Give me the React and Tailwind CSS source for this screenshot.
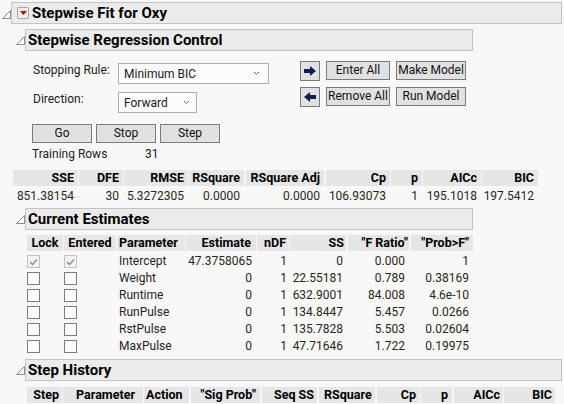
import React from 'react';

function Tri() {
  return (
    <svg width="9" height="9" viewBox="0 0 9 9" className="shrink-0 block">
      <path d="M0.5 8.5 H8.5 V0.5 Z" fill="#fbfbfb" stroke="#8e8e8e" strokeWidth="1" />
    </svg>
  );
}

function Chevron() {
  return (
    <svg width="7" height="5" viewBox="0 0 7 5" className="block">
      <path d="M1 1 L3.5 3.5 L6 1" fill="none" stroke="#707070" strokeWidth="1" />
    </svg>
  );
}

function Check({ locked }) {
  if (locked) {
    return (
      <div className="w-[13px] h-[13px] border border-[#c2c2c2] bg-[#f2f2f2] flex items-center justify-center">
        <svg width="9" height="8" viewBox="0 0 9 8" className="block">
          <path d="M1 4 L3.5 6.5 L8 1.5" fill="none" stroke="#8c8c8c" strokeWidth="1.4" />
        </svg>
      </div>
    );
  }
  return <div className="w-[13px] h-[13px] border border-[#7c7c7c] bg-[#fdfdfd]" />;
}

function Btn({ children, className }) {
  return (
    <div className={'h-[19px] border border-[#7a7a7a] bg-[#e1e1e1] flex items-center justify-center leading-[17px] text-[#111] ' + className}>
      {children}
    </div>
  );
}

function ArrowBtn({ left }) {
  return (
    <div className="w-[20px] h-[20px] border border-[#7a7a7a] bg-[#e1e1e1] flex items-center justify-center">
      <svg width="12" height="10" viewBox="0 0 12 10" className={'block ' + (left ? '-scale-x-100' : '')}>
        <path d="M0 3 H6 V0 L12 5 L6 10 V7 H0 Z" fill="#0e1f52" />
      </svg>
    </div>
  );
}

const statCols = [
  { h: 'SSE', v: '851.38154', c: 'w-[65px]' },
  { h: 'DFE', v: '30', c: 'w-[44px] ml-[1px]' },
  { h: 'RMSE', v: '5.3272305', c: 'w-[64px] ml-[1px]' },
  { h: 'RSquare', v: '0.0000', c: 'w-[55px] ml-[1px]' },
  { h: 'RSquare Adj', v: '0.0000', c: 'w-[78px] ml-[2px]' },
  { h: 'Cp', v: '106.93073', c: 'w-[64px] ml-[2px]' },
  { h: 'p', v: '1', c: 'w-[31px] ml-[1px]' },
  { h: 'AICc', v: '195.1018', c: 'w-[58px] ml-[1px]' },
  { h: 'BIC', v: '197.5412', c: 'w-[56px] ml-[1px]' },
];

const estRows = [
  { p: 'Intercept', e: '47.3758065', n: '1', ss: '0', f: '0.000', pr: '1', locked: true },
  { p: 'Weight', e: '0', n: '1', ss: '22.55181', f: '0.789', pr: '0.38169' },
  { p: 'Runtime', e: '0', n: '1', ss: '632.9001', f: '84.008', pr: '4.6e-10' },
  { p: 'RunPulse', e: '0', n: '1', ss: '134.8447', f: '5.457', pr: '0.0266' },
  { p: 'RstPulse', e: '0', n: '1', ss: '135.7828', f: '5.503', pr: '0.02604' },
  { p: 'MaxPulse', e: '0', n: '1', ss: '47.71646', f: '1.722', pr: '0.19975' },
];

const histCols = [
  { h: 'Step', c: 'w-[35px] text-right pr-[3px]' },
  { h: 'Parameter', c: 'w-[80px] ml-[1px] text-right pr-[8px]' },
  { h: 'Action', c: 'w-[45px] ml-[1px] text-left pl-[2px]' },
  { h: '"Sig Prob"', c: 'w-[69px] ml-[2px] text-right pr-[4px]' },
  { h: 'Seq SS', c: 'w-[55px] ml-[2px] text-right pr-[3px]' },
  { h: 'RSquare', c: 'w-[56px] ml-[2px] text-left pl-[5px]' },
  { h: 'Cp', c: 'w-[43px] ml-[2px] text-right pr-[4px]' },
  { h: 'p', c: 'w-[31px] ml-[1px] text-right pr-[4px]' },
  { h: 'AICc', c: 'w-[49px] ml-[2px] text-right pr-[3px]' },
  { h: 'BIC', c: 'w-[51px] ml-[1px] text-right pr-[3px]' },
];

const hd = 'bg-[#e6e6e6] font-bold text-[12.5px] text-black h-[16px] leading-[16px] whitespace-nowrap';
const num = 'text-[#2b2616]';

export default function App() {
  return (
    <div className="w-[564px] h-[404px] overflow-hidden bg-[#f8f8f8] [font-family:Roboto,sans-serif] text-[12px] text-[#1b1b1b]">
      {/* Stepwise Fit outline header */}
      <div className="flex items-center pl-[2px] pt-[2px]">
        <div className="mt-[2px]"><Tri /></div>
        <div className="w-[551px] h-[22px] bg-[#ebebeb] border border-[#c3c3c3] flex items-center pl-[5px]">
          <div className="w-[12px] h-[12px] border border-[#a8a8a8] bg-[#eeeeee] rounded-[1px] flex items-center justify-center">
            <svg width="7" height="4" viewBox="0 0 7 4" className="block"><path d="M0 0 H7 L3.5 4 Z" fill="#d00000" /></svg>
          </div>
          <span className="ml-[3px] font-bold text-[15px] leading-[20px] text-black">Stepwise Fit for Oxy</span>
        </div>
      </div>

      {/* Stepwise Regression Control header */}
      <div className="flex items-center pl-[16px] mt-[5px]">
        <Tri />
        <div className="w-[448px] h-[22px] bg-[#ebebeb] border border-[#c3c3c3] flex items-center pl-[2px]">
          <span className="font-bold text-[15px] leading-[20px] text-black">Stepwise Regression Control</span>
        </div>
      </div>

      {/* Control area */}
      <div className="flex pl-[32px] mt-[10px]">
        <div className="w-[268px] pt-[2px]">
          <div className="flex h-[21px]">
            <div className="w-[86px] pl-[1px] leading-[14px]">Stopping Rule:</div>
            <div className="w-[151px] h-[21px] border border-[#acacac] bg-[#fcfcfc] flex items-center justify-between pl-[5px] pr-[8px]">
              <span>Minimum BIC</span>
              <Chevron />
            </div>
          </div>
          <div className="flex h-[21px] mt-[8px]">
            <div className="w-[86px] pl-[1px] leading-[14px]">Direction:</div>
            <div className="w-[79px] h-[21px] border border-[#acacac] bg-[#fcfcfc] flex items-center justify-between pl-[5px] pr-[6px]">
              <span>Forward</span>
              <Chevron />
            </div>
          </div>
          <div className="flex gap-[4px] mt-[11px]">
            <Btn className="w-[60px]">Go</Btn>
            <Btn className="w-[60px]">Stop</Btn>
            <Btn className="w-[60px]">Step</Btn>
          </div>
          <div className="flex mt-[4px] leading-[14px]">
            <span className="w-[113px]">Training Rows</span>
            <span>31</span>
          </div>
        </div>
        <div className="flex flex-col gap-[6px]">
          <div className="flex items-start">
            <ArrowBtn />
            <Btn className="w-[64px] ml-[6px]">Enter All</Btn>
            <Btn className="w-[70px] ml-[6px]">Make Model</Btn>
          </div>
          <div className="flex items-start">
            <ArrowBtn left />
            <Btn className="w-[64px] ml-[6px]">Remove All</Btn>
            <Btn className="w-[70px] ml-[6px]">Run Model</Btn>
          </div>
        </div>
      </div>

      {/* Stats table */}
      <div className="flex pl-[13px] mt-[9px]">
        {statCols.map((c) => (
          <div key={c.h} className={'flex flex-col ' + c.c}>
            <div className={hd + ' text-right pr-[4px]'}>{c.h}</div>
            <div className={'h-[18px] leading-[20px] text-right pr-[4px] ' + num}>{c.v}</div>
          </div>
        ))}
      </div>

      {/* Current Estimates header */}
      <div className="flex items-center pl-[16px] mt-[4px]">
        <Tri />
        <div className="w-[448px] h-[22px] bg-[#ebebeb] border border-[#c3c3c3] flex items-center pl-[2px]">
          <span className="font-bold text-[15px] leading-[20px] text-black">Current Estimates</span>
        </div>
      </div>

      {/* Estimates table */}
      <div className="pl-[27px] mt-[5px]">
        <div className="flex">
          <div className={hd + ' w-[36px] text-center'}>Lock</div>
          <div className={hd + ' w-[52px] ml-[1px] text-center'}>Entered</div>
          <div className={hd + ' w-[68px] ml-[1px] text-left pl-[2px]'}>Parameter</div>
          <div className={hd + ' w-[70px] ml-[1px] text-right pr-[5px]'}>Estimate</div>
          <div className={hd + ' w-[32px] ml-[1px] text-right pr-[3px]'}>nDF</div>
          <div className={hd + ' w-[56px] ml-[1px] text-right pr-[2px]'}>SS</div>
          <div className={hd + ' w-[61px] ml-[2px] text-right pr-[1px]'}>"F Ratio"</div>
          <div className={hd + ' w-[62px] ml-[2px] text-right pr-[4px]'}>"Prob&gt;F"</div>
        </div>
        <div className="mt-[2px]">
          {estRows.map((r) => (
            <div key={r.p} className="flex h-[17px] items-center leading-[17px] whitespace-nowrap">
              <div className="w-[36px]"><Check locked={r.locked} /></div>
              <div className="w-[52px] ml-[1px]"><Check locked={r.locked} /></div>
              <div className="w-[68px] ml-[1px] pl-[2px] text-[#2a1a2c]">{r.p}</div>
              <div className={'w-[70px] ml-[1px] text-right pr-[4px] ' + num}>{r.e}</div>
              <div className={'w-[32px] ml-[1px] text-right pr-[2px] ' + num}>{r.n}</div>
              <div className={'w-[56px] ml-[1px] text-right pr-[3px] ' + num}>{r.ss}</div>
              <div className={'w-[61px] ml-[2px] text-right pr-[4px] ' + num}>{r.f}</div>
              <div className={'w-[62px] ml-[2px] text-right pr-[4px] ' + num}>{r.pr}</div>
            </div>
          ))}
        </div>
      </div>

      {/* Step History header */}
      <div className="flex items-center pl-[16px] mt-[4px]">
        <Tri />
        <div className="w-[537px] h-[22px] bg-[#ebebeb] border border-[#c3c3c3] flex items-center pl-[2px]">
          <span className="font-bold text-[15px] leading-[20px] text-black">Step History</span>
        </div>
      </div>

      {/* Step History table */}
      <div className="flex pl-[27px] mt-[6px]">
        {histCols.map((c) => (
          <div key={c.h} className={hd + ' ' + c.c}>{c.h}</div>
        ))}
      </div>
    </div>
  );
}
